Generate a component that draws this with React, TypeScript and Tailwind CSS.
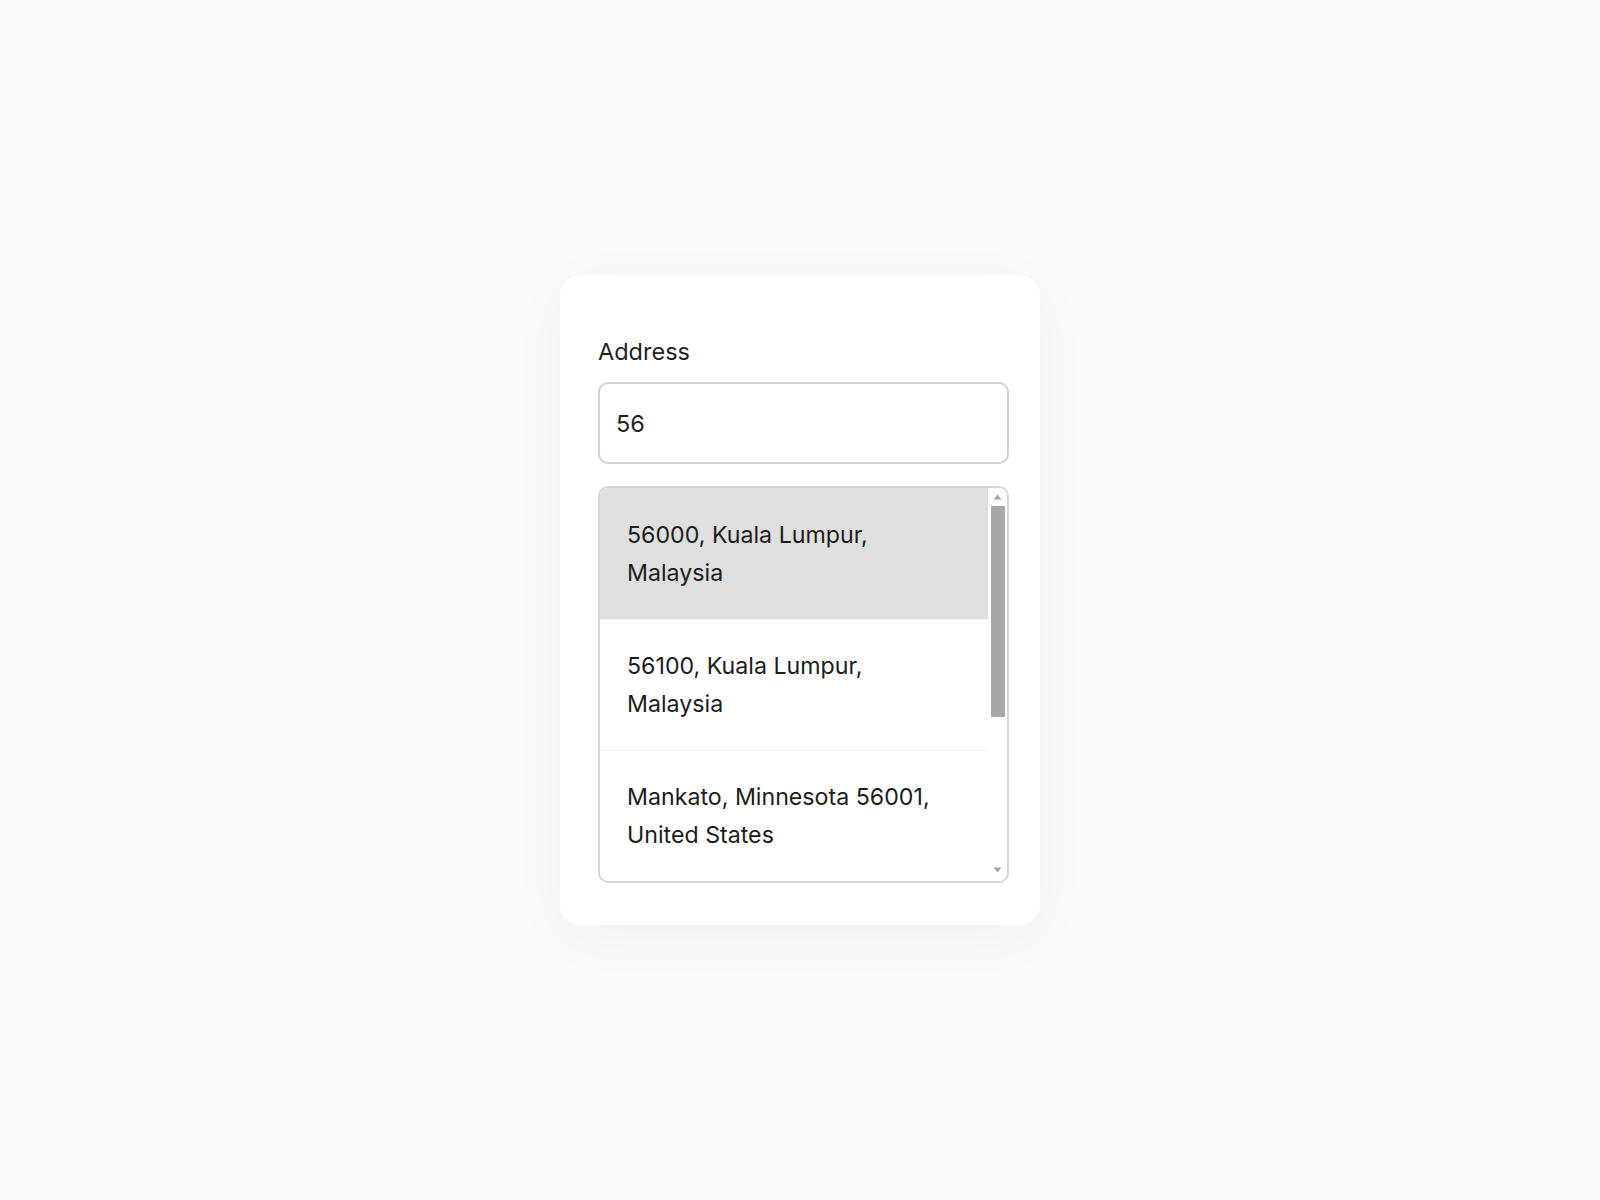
import { useState } from "react"

const results = [
  "56000, Kuala Lumpur, Malaysia",
  "56100, Kuala Lumpur, Malaysia",
  "Mankato, Minnesota 56001, United States",
]

function AddressField() {
  const [value, setValue] = useState("56")
  const active = 0

  return (
    <div className="w-[480px] h-[650px] rounded-[20px] bg-white pt-[61px] pl-[38px] pr-[31px] shadow-[0_12px_60px_rgba(0,0,0,0.035)]">
      <label className="block text-[23.5px] leading-[32px] text-[#1f1f1f]">Address</label>
      <input
        value={value}
        onChange={(e) => setValue(e.target.value)}
        className="mt-[14px] block h-[82px] w-full rounded-[10px] border-2 border-[#d2d2d2] px-4 text-[23.5px] text-[#222] outline-none"
      />

      <div className="mt-[22px] flex h-[397px] overflow-hidden rounded-[10px] border-2 border-[#d6d6d6]">
        <ul className="flex-1">
          {results.map((r, i) => (
            <li
              key={r}
              className={
                i === active
                  ? "flex h-[131px] items-center bg-[#dfdfdf] pl-[27px] pr-10 text-[23.2px] leading-[38px] text-[#1c1c1c]"
                  : "flex h-[131px] items-center border-t border-[#f0f0f0] pl-[27px] pr-10 text-[23.2px] leading-[38px] text-[#1c1c1c]"
              }
            >
              {r}
            </li>
          ))}
        </ul>

        {/* scrollbar */}
        <div className="flex w-[19px] flex-col items-center bg-white">
          <div className="flex h-[18px] items-center justify-center">
            <svg width="9" height="6" viewBox="0 0 9 6">
              <path d="M4.5 0.5 L8.5 5.5 L0.5 5.5 Z" fill="#a3a3a3" />
            </svg>
          </div>
          <div className="h-[211px] w-[14px] bg-[#a8a8a8]" />
          <div className="flex-1" />
          <div className="flex h-[22px] items-center justify-center">
            <svg width="9" height="6" viewBox="0 0 9 6">
              <path d="M0.5 0.5 L8.5 0.5 L4.5 5.5 Z" fill="#a3a3a3" />
            </svg>
          </div>
        </div>
      </div>
    </div>
  )
}

export default function App() {
  return (
    <div
      className="flex min-h-screen items-center justify-center bg-[#fafafa]"
      style={{ fontFamily: "Inter, 'Liberation Sans', sans-serif" }}
    >
      <AddressField />
    </div>
  )
}
